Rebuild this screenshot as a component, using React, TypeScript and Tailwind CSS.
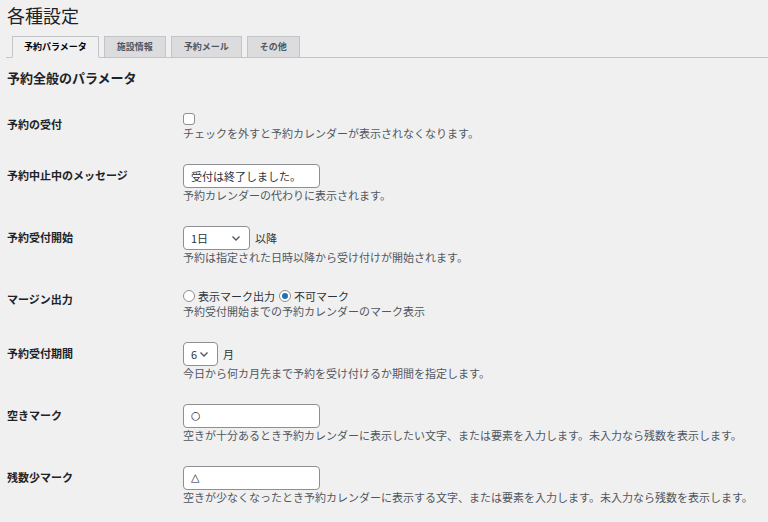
import type { ReactNode } from 'react'

const font = { fontFamily: '"Noto Sans CJK JP", "Noto Sans", sans-serif' }

const tabs = ['予約パラメータ', '施設情報', '予約メール', 'その他']

function Chevron() {
  return (
    <svg width="10" height="10" viewBox="0 0 10 10" className="shrink-0">
      <polyline points="1.5,3.5 5,7 8.5,3.5" fill="none" stroke="#50575e" strokeWidth="1.4" />
    </svg>
  )
}

function Select({ value, width }: { value: string; width: string }) {
  return (
    <div
      className={`flex h-[24px] items-center justify-between rounded-[4px] border border-[#8c8f94] bg-white pl-[7px] pr-[8px] text-[11px] text-[#2c3338] ${width}`}
    >
      <span>{value}</span>
      <Chevron />
    </div>
  )
}

function TextInput({ value, mark }: { value: string; mark?: boolean }) {
  return (
    <div className="flex h-[24px] w-[137px] items-center rounded-[4px] border border-[#8c8f94] bg-white px-[7px] text-[11px] text-[#2c3338]">
      <span className={mark ? "font-['DejaVu_Sans',sans-serif] text-[11px] text-[#1d2327]" : ''}>{value}</span>
    </div>
  )
}

function Desc({ children }: { children: ReactNode }) {
  return <p className="text-[11px] leading-[14px] text-[#50575e]">{children}</p>
}

function Row({ label, children }: { label: string; children: ReactNode }) {
  return (
    <div className="flex py-[12px]">
      <div className="w-[176px] shrink-0 pt-[4px] text-[11px] font-bold leading-[14px] text-[#1d2327]">
        {label}
      </div>
      <div className="flex flex-col">{children}</div>
    </div>
  )
}

function Radio({ checked, label }: { checked?: boolean; label: string }) {
  return (
    <span className="flex items-center gap-[3px]">
      <span className="flex h-[12px] w-[12px] items-center justify-center rounded-full border border-[#8c8f94] bg-white">
        {checked && <span className="h-[6px] w-[6px] rounded-full bg-[#2271b1]" />}
      </span>
      <span>{label}</span>
    </span>
  )
}

export default function App() {
  return (
    <div className="min-h-screen bg-[#f0f0f1] text-[#1d2327]" style={font}>
      <div className="pt-[3px]">
        <h1 className="pl-[7px] text-[18px] font-normal leading-[24px] text-[#1d2327]">各種設定</h1>

        {/* tabs */}
        <nav className="mt-[9px] ml-[6px] flex items-end gap-[5px] border-b border-[#c3c4c7] pl-[6px]">
          {tabs.map((t, i) =>
            i === 0 ? (
              <div
                key={t}
                className="-mb-px flex h-[22px] items-center border border-[#c3c4c7] border-b-[#f0f0f1] bg-[#f0f0f1] px-[11px] text-[9px] font-bold text-black"
              >
                {t}
              </div>
            ) : (
              <div
                key={t}
                className="flex h-[21px] items-center border border-b-0 border-[#c3c4c7] bg-[#dcdcde] px-[12px] text-[9px] font-bold text-[#50575e]"
              >
                {t}
              </div>
            ),
          )}
        </nav>

        <div className="pl-[7px]">
          <h2 className="mt-[11px] text-[13px] font-bold leading-[18px]">予約全般のパラメータ</h2>

          <div className="mt-[14px] flex flex-col">
            <Row label="予約の受付">
              <span className="mb-[1px] block h-[12px] w-[12px] rounded-[3px] border border-[#8c8f94] bg-white" />
              <Desc>チェックを外すと予約カレンダーが表示されなくなります。</Desc>
            </Row>

            <Row label="予約中止中のメッセージ">
              <TextInput value="受付は終了しました。" />
              <Desc>予約カレンダーの代わりに表示されます。</Desc>
            </Row>

            <Row label="予約受付開始">
              <div className="flex items-center gap-[5px] text-[11px] text-[#2c3338]">
                <Select value="1日" width="w-[67px]" />
                <span>以降</span>
              </div>
              <Desc>予約は指定された日時以降から受け付けが開始されます。</Desc>
            </Row>

            <Row label="マージン出力">
              <div className="flex h-[16px] items-center gap-[4px] text-[11px] text-[#2c3338]">
                <Radio label="表示マーク出力" />
                <Radio checked label="不可マーク" />
              </div>
              <Desc>予約受付開始までの予約カレンダーのマーク表示</Desc>
            </Row>

            <Row label="予約受付期間">
              <div className="flex items-center gap-[5px] text-[11px] text-[#2c3338]">
                <Select value="6" width="w-[35px]" />
                <span>月</span>
              </div>
              <Desc>今日から何カ月先まで予約を受け付けるか期間を指定します。</Desc>
            </Row>

            <Row label="空きマーク">
              <TextInput value="○" mark />
              <Desc>空きが十分あるとき予約カレンダーに表示したい文字、または要素を入力します。未入力なら残数を表示します。</Desc>
            </Row>

            <Row label="残数少マーク">
              <TextInput value="△" mark />
              <Desc>空きが少なくなったとき予約カレンダーに表示する文字、または要素を入力します。未入力なら残数を表示します。</Desc>
            </Row>
          </div>
        </div>
      </div>
    </div>
  )
}
